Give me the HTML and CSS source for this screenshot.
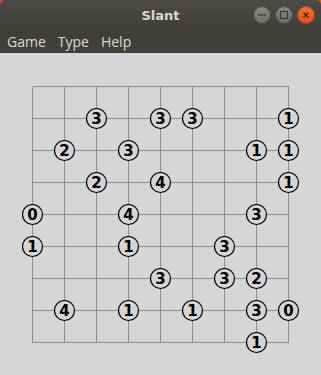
FILE: index.html
```html
<!DOCTYPE html>
<html>
<head>
<meta charset="utf-8">
<link rel="stylesheet" href="styles.css">
</head>
<body>
<div class="window">
  <div class="titlebar">
    <span class="title">Slant</span>
    <div class="controls">
      <span class="btn btn-min"><svg width="18" height="18" viewBox="0 0 18 18"><line x1="5" y1="9" x2="13" y2="9" stroke="#3a3935" stroke-width="1.2"/></svg></span>
      <span class="btn btn-max"><svg width="18" height="18" viewBox="0 0 18 18"><rect x="5.5" y="5.5" width="7" height="7" fill="none" stroke="#3a3935" stroke-width="1.2"/></svg></span>
      <span class="btn btn-close"><svg width="18" height="18" viewBox="0 0 18 18"><path d="M6.5 6.5 L11.5 11.5 M11.5 6.5 L6.5 11.5" stroke="#3a2a20" stroke-width="1.3"/></svg></span>
    </div>
  </div>
  <div class="menubar">
    <span class="menu">Game</span>
    <span class="menu">Type</span>
    <span class="menu">Help</span>
  </div>
  <div class="content">
    <svg class="board" width="321" height="322" viewBox="0 53 321 322">
      <g stroke="#8e8e8e" stroke-width="1" shape-rendering="crispEdges">
        <line x1="32.5" y1="86.5" x2="32.5" y2="342.5"/>
        <line x1="64.5" y1="86.5" x2="64.5" y2="342.5"/>
        <line x1="96.5" y1="86.5" x2="96.5" y2="342.5"/>
        <line x1="128.5" y1="86.5" x2="128.5" y2="342.5"/>
        <line x1="160.5" y1="86.5" x2="160.5" y2="342.5"/>
        <line x1="192.5" y1="86.5" x2="192.5" y2="342.5"/>
        <line x1="224.5" y1="86.5" x2="224.5" y2="342.5"/>
        <line x1="256.5" y1="86.5" x2="256.5" y2="342.5"/>
        <line x1="288.5" y1="86.5" x2="288.5" y2="342.5"/>
        <line x1="32.5" y1="86.5" x2="288.5" y2="86.5"/>
        <line x1="32.5" y1="118.5" x2="288.5" y2="118.5"/>
        <line x1="32.5" y1="150.5" x2="288.5" y2="150.5"/>
        <line x1="32.5" y1="182.5" x2="288.5" y2="182.5"/>
        <line x1="32.5" y1="214.5" x2="288.5" y2="214.5"/>
        <line x1="32.5" y1="246.5" x2="288.5" y2="246.5"/>
        <line x1="32.5" y1="278.5" x2="288.5" y2="278.5"/>
        <line x1="32.5" y1="310.5" x2="288.5" y2="310.5"/>
        <line x1="32.5" y1="342.5" x2="288.5" y2="342.5"/>
      </g>
      <g class="clues">
        <g transform="translate(96.5,118.5)"><circle r="10"/><text y="5.5">3</text></g>
        <g transform="translate(160.5,118.5)"><circle r="10"/><text y="5.5">3</text></g>
        <g transform="translate(192.5,118.5)"><circle r="10"/><text y="5.5">3</text></g>
        <g transform="translate(288.5,118.5)"><circle r="10"/><text y="5.5">1</text></g>

        <g transform="translate(64.5,150.5)"><circle r="10"/><text y="5.5">2</text></g>
        <g transform="translate(128.5,150.5)"><circle r="10"/><text y="5.5">3</text></g>
        <g transform="translate(256.5,150.5)"><circle r="10"/><text y="5.5">1</text></g>
        <g transform="translate(288.5,150.5)"><circle r="10"/><text y="5.5">1</text></g>

        <g transform="translate(96.5,182.5)"><circle r="10"/><text y="5.5">2</text></g>
        <g transform="translate(160.5,182.5)"><circle r="10"/><text y="5.5">4</text></g>
        <g transform="translate(288.5,182.5)"><circle r="10"/><text y="5.5">1</text></g>

        <g transform="translate(32.5,214.5)"><circle r="10"/><text y="5.5">0</text></g>
        <g transform="translate(128.5,214.5)"><circle r="10"/><text y="5.5">4</text></g>
        <g transform="translate(256.5,214.5)"><circle r="10"/><text y="5.5">3</text></g>

        <g transform="translate(32.5,246.5)"><circle r="10"/><text y="5.5">1</text></g>
        <g transform="translate(128.5,246.5)"><circle r="10"/><text y="5.5">1</text></g>
        <g transform="translate(224.5,246.5)"><circle r="10"/><text y="5.5">3</text></g>

        <g transform="translate(160.5,278.5)"><circle r="10"/><text y="5.5">3</text></g>
        <g transform="translate(224.5,278.5)"><circle r="10"/><text y="5.5">3</text></g>
        <g transform="translate(256.5,278.5)"><circle r="10"/><text y="5.5">2</text></g>

        <g transform="translate(64.5,310.5)"><circle r="10"/><text y="5.5">4</text></g>
        <g transform="translate(128.5,310.5)"><circle r="10"/><text y="5.5">1</text></g>
        <g transform="translate(192.5,310.5)"><circle r="10"/><text y="5.5">1</text></g>
        <g transform="translate(256.5,310.5)"><circle r="10"/><text y="5.5">3</text></g>
        <g transform="translate(288.5,310.5)"><circle r="10"/><text y="5.5">0</text></g>

        <g transform="translate(256.5,342.5)"><circle r="10"/><text y="5.5">1</text></g>
      </g>
    </svg>
  </div>
</div>
</body>
</html>
```
FILE: styles.css
```css
html, body {
  margin: 0;
  padding: 0;
  background: #d6532a;
}
.window {
  width: 321px;
  height: 375px;
  display: flex;
  flex-direction: column;
  overflow: hidden;
  font-family: "DejaVu Sans", "Noto Sans", sans-serif;
}
.titlebar {
  height: 30px;
  flex: none;
  display: flex;
  align-items: center;
  justify-content: center;
  position: relative;
  background: linear-gradient(#4b4a45, #403f3a);
  border-radius: 5px 5px 0 0;
}
.title {
  color: #dcd9d2;
  font-weight: bold;
  font-size: 13px;
}
.controls {
  position: absolute;
  right: 6px;
  top: 6px;
  display: flex;
  gap: 4px;
}
.btn {
  width: 18px;
  height: 18px;
  border-radius: 50%;
  display: flex;
  background: linear-gradient(#8a8984, #6d6c67);
  box-shadow: inset 0 0 0 1px #3f3e3a;
}
.btn-close {
  background: linear-gradient(#f2733f, #e2511e);
  box-shadow: inset 0 0 0 1px #8d3a1a;
}
.menubar {
  height: 23px;
  flex: none;
  display: flex;
  align-items: center;
  gap: 12px;
  padding: 0 0 0 7px;
  background: #403f3a;
}
.menu {
  color: #dcd9d2;
  font-size: 14px;
  font-family: "Open Sans", "DejaVu Sans", sans-serif;
}
.content {
  flex: 1;
  background: #d6d6d6;
}
.board {
  display: block;
}
.clues circle {
  fill: #d6d6d6;
  stroke: #000;
  stroke-width: 1.2;
}
.clues text {
  font-family: "DejaVu Sans", sans-serif;
  font-weight: bold;
  font-size: 15px;
  text-anchor: middle;
  fill: #000;
}
```
